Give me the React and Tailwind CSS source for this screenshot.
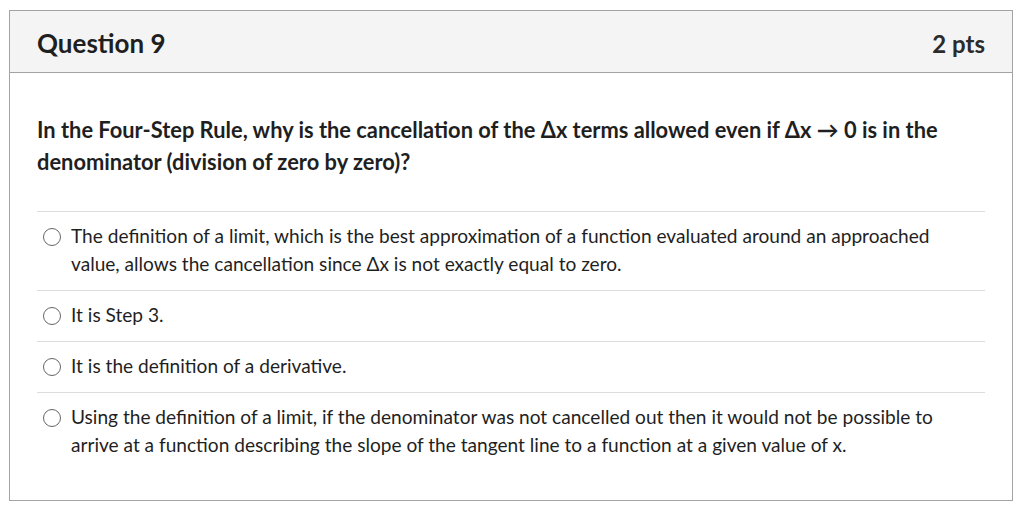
const OPTIONS = [
  'The definition of a limit, which is the best approximation of a function evaluated around an approached value, allows the cancellation since Δx is not exactly equal to zero.',
  'It is Step 3.',
  'It is the definition of a derivative.',
  'Using the definition of a limit, if the denominator was not cancelled out then it would not be possible to arrive at a function describing the slope of the tangent line to a function at a given value of x.',
];

export default function App() {
  return (
    <div className="w-[1024px] h-[509px] bg-white pt-[10px] pl-[9px] font-['Lato','Noto_Sans',sans-serif] text-[#1f1f1f]">
      <div className="w-[1004px] h-[491px] border border-[#a3a3a3]">
        <div className="h-[62px] flex items-center justify-between px-[27px] bg-[#f4f4f4] border-b border-[#a3a3a3]">
          <h2 className="text-[26px] font-bold leading-none pt-[2px]">Question 9</h2>
          <span className="text-[24px] font-bold leading-none text-[#2b2b2b] pt-[4px]">2 pts</span>
        </div>
        <div className="px-[27px] pt-[41px]">
          <p className="text-[21.85px] font-bold leading-[32px] pb-[33px]">
            In the Four-Step Rule, why is the cancellation of the Δx terms allowed even if Δx → 0 is in the denominator (division of zero by zero)?
          </p>
          <div className="border-t border-[#dcdcdc]">
            {OPTIONS.map((o, i) => (
              <label
                key={i}
                className={`flex items-start gap-[8px] pl-[6px] pr-[20px] pt-[10px] pb-[12px] ${i < OPTIONS.length - 1 ? 'border-b border-[#dcdcdc]' : ''}`}
              >
                <span className="mt-[6px] w-[18px] h-[18px] shrink-0 rounded-full border-[1.5px] border-[#666] bg-white" />
                <span className="text-[19.1px] leading-[28px] pl-[2px]">{o}</span>
              </label>
            ))}
          </div>
        </div>
      </div>
    </div>
  );
}
